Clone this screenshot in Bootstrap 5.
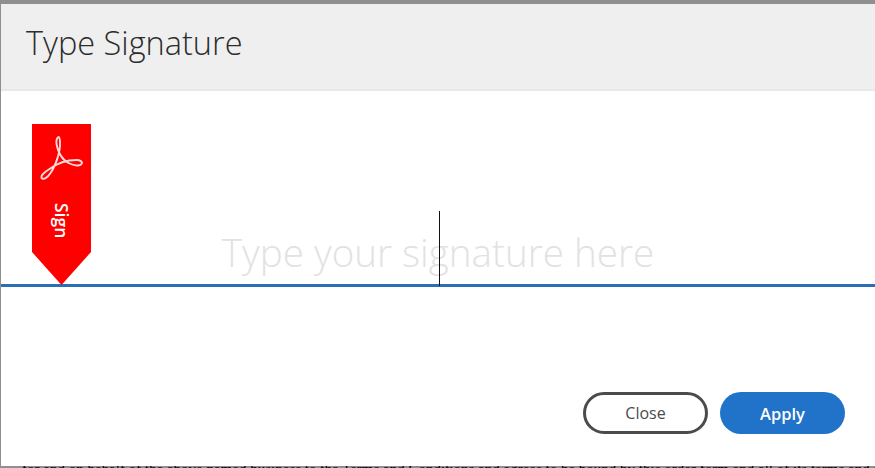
<!DOCTYPE html>
<html lang="en">
<head>
<meta charset="utf-8">
<title>Type Signature</title>
<link rel="stylesheet" href="https://cdn.jsdelivr.net/npm/bootstrap@5.3.0/dist/css/bootstrap.min.css">
<style>
html,body{height:468px;overflow:hidden}
body{background:#8f8f8f;padding:4px 0 0 1px;font-family:"Open Sans","Noto Sans",sans-serif}
.sig-dialog{height:462px;background:#fff;border-top-left-radius:3px}
.sig-head{height:87px;background:#efefef;border-bottom:2px solid #e8e8e8;padding:0 25px}
.sig-title{font-size:32.5px;font-weight:300;color:#2c2c2c;margin:0;line-height:1;padding-bottom:7px}
.sig-zone{height:196px;border-bottom:3px solid #2a6fb5}
.sig-input{font-size:38.600px;font-weight:300;color:#e2e2e2;line-height:1;padding-bottom:12px}
.sig-caret{width:1px;height:75px;background:#111;left:438px;bottom:-2px}
.sig-flag{left:31px;top:33px;width:59px;height:161px;background:#f00;clip-path:polygon(0 0,100% 0,100% 128px,50% 100%,0 128px)}
.sig-flag svg{display:block}
.sig-flag-txt{writing-mode:vertical-rl;color:#fff;font-size:17.500px;font-weight:600;line-height:1;top:79px;left:20px}
.sig-foot{padding:0 30px 32px 0}
.sig-btn{width:125px;height:42px;border-radius:21px;font-size:16px;padding:0;line-height:1}
.sig-close{background:#fff;border:3px solid #4b4b4b;color:#4b4b4b}
.sig-apply{background:#2073c9;border:0;color:#fff;font-weight:600;font-size:16.500px;padding-top:2px}
.sig-doc{height:2px;overflow:hidden;margin-left:21px;font-family:"Liberation Serif",serif;font-size:15px;line-height:.4;color:#000;white-space:nowrap}
</style>
</head>
<body>
<div class="sig-dialog d-flex flex-column">
  <div class="sig-head d-flex align-items-center flex-shrink-0">
    <h1 class="sig-title">Type Signature</h1>
  </div>
  <div class="sig-zone position-relative d-flex justify-content-center align-items-end flex-shrink-0">
    <div class="sig-input">Type your signature here</div>
    <div class="sig-caret position-absolute"></div>
    <div class="sig-flag position-absolute">
      <svg width="59" height="64" viewBox="32 124 59 64" aria-hidden="true">
        <path d="M59 137c-2 0-3 3-2.500 7c1 8 6 16 12 19c4 2 11 4 13 1c1.500-2-1-4-5-4c-8 0-19 3-27 9c-5 3-9 7-8 9c2 2 6 0 9-5c5-7 10-21 9.500-31c-.2-3-.5-5-1.500-5z" fill="none" stroke="#ffdada" stroke-width="1.900"/>
      </svg>
      <span class="sig-flag-txt position-absolute">Sign</span>
    </div>
  </div>
  <div class="sig-foot flex-grow-1 d-flex justify-content-end align-items-end gap-2">
    <button type="button" class="btn sig-btn sig-close me-1">Close</button>
    <button type="button" class="btn sig-btn sig-apply">Apply</button>
  </div>
</div>
<div class="sig-doc">for and on behalf of the above named business to the Terms and Conditions and agrees to be bound by this order form and all of its terms and schedules</div>
</body>
</html>
